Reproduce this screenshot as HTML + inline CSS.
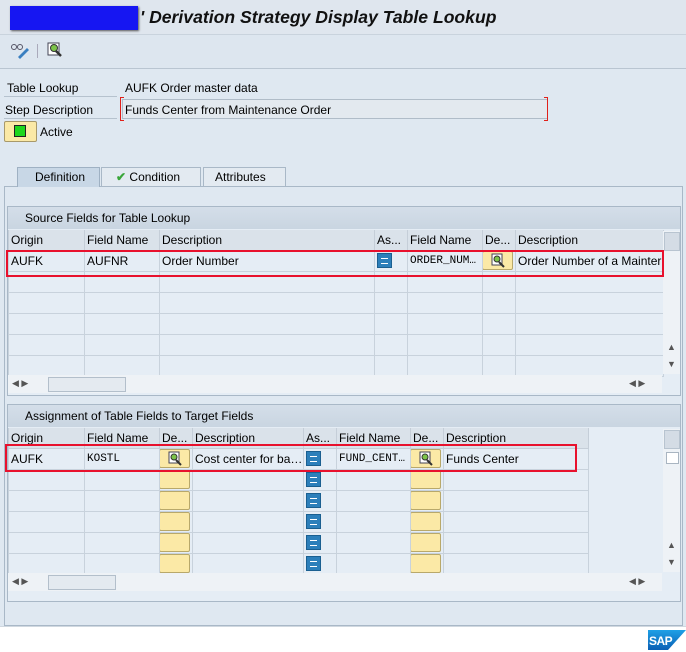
<!DOCTYPE html>
<html><head><meta charset="utf-8"><style>
*{margin:0;padding:0;box-sizing:border-box}
body{width:686px;height:652px;overflow:hidden;background:#dfe8f1;font-family:"Liberation Sans",sans-serif;font-size:12px;color:#000;position:relative}
.a{position:absolute}
.t{white-space:nowrap}
table{border-collapse:collapse;table-layout:fixed;position:absolute}
td{border:1px solid #c8d2dc;height:21px;padding:0 2px;white-space:nowrap;overflow:hidden;font-size:12px;background:#e5edf5}
tr.h td{background:#dae2ea;height:20px;border-color:#c5ced8;border-top:none}
.mono{font-family:"Liberation Mono",monospace;font-size:11px}
.yb{display:block;width:31px;height:19px;background:#fbe9a6;border:1px solid #b8a86a;border-radius:2px;margin-left:-1px;position:relative}
.bb{display:inline-block;width:15px;height:15px;background:#2c7fba;border:1px solid #1a5f90;position:relative;vertical-align:middle}
.bb:after{content:"";position:absolute;left:3px;top:4px;width:7px;height:4px;border-top:1.5px solid #fff;border-bottom:1.5px solid #fff}
.grp{position:absolute;border:1px solid #a9b8c7;background:#e5edf5}
.gh{position:absolute;left:0;right:0;top:0;height:22px;background:linear-gradient(#d4dee9,#c9d5e1);padding-left:17px;line-height:22px;font-size:12px}
.vs{position:absolute;background:#eef2f6}
.hs{position:absolute;background:#eef2f6}
.red{position:absolute;border:2px solid #e8112d}
</style></head><body>
<div class="a" style="left:0;top:0;width:686px;height:35px;background:#dfe6ee;border-bottom:1px solid #c9d3dd"></div>
<div class="a" style="left:10px;top:6px;width:128px;height:24px;background:#1616f2;box-shadow:1px 1px 2px #555"></div>
<div class="a t" style="left:140px;top:7px;font-size:17.6px;font-weight:bold;font-style:italic;color:#111">' Derivation Strategy Display Table Lookup</div>
<div class="a" style="left:0;top:35px;width:686px;height:34px;background:#dde6ef;border-bottom:1px solid #b9c5d1"></div>
<svg class="a" style="left:10px;top:42px" width="22" height="18"><circle cx="4" cy="5" r="2.5" fill="none" stroke="#556" /><circle cx="10" cy="5" r="2.5" fill="none" stroke="#556"/><path d="M8 15 L17 6 L19 8 L10 17 Z" fill="#3a7fc0"/></svg>
<div class="a" style="left:37px;top:44px;width:1px;height:14px;background:#aab"></div>
<svg class="a" style="left:46px;top:41px" width="18" height="18"><rect x="2" y="2" width="11" height="12" fill="#fff" stroke="#445"/><circle cx="8" cy="7" r="3.5" fill="#7cc44a" stroke="#333"/><path d="M10 10 L15 15" stroke="#333" stroke-width="2.5"/></svg>
<div class="a t" style="left:7px;top:81px">Table Lookup</div>
<div class="a t" style="left:125px;top:81px">AUFK Order master data</div>
<div class="a" style="left:4px;top:96px;width:113px;height:1px;background:#b6c2ce"></div>
<div class="a t" style="left:5px;top:103px">Step Description</div>
<div class="a" style="left:122px;top:99px;width:426px;height:20px;background:#e3e9ef;border:1px solid #b0bcc8"></div>
<div class="a t" style="left:125px;top:103px">Funds Center from Maintenance Order</div>
<div class="a" style="left:120px;top:97px;width:4px;height:24px;border:1.5px solid #e0201a;border-right:none"></div>
<div class="a" style="left:544px;top:97px;width:4px;height:24px;border:1.5px solid #e0201a;border-left:none"></div>
<div class="a" style="left:4px;top:118px;width:113px;height:1px;background:#b6c2ce"></div>
<div class="a" style="left:4px;top:121px;width:33px;height:21px;background:#fbe9a6;border:1px solid #a8996a;border-radius:2px"></div>
<div class="a" style="left:14px;top:125px;width:12px;height:12px;background:#1ed61e;border:1px solid #222"></div>
<div class="a t" style="left:40px;top:125px">Active</div>
<div class="a" style="left:4px;top:186px;width:679px;height:440px;background:#dfe8f1;border:1px solid #a9b8c7"></div>
<div class="a t" style="left:17px;top:167px;width:83px;height:20px;background:#c8d7e6;border:1px solid #9fb1c3;border-bottom:none;padding-left:17px;line-height:19px">Definition</div>
<div class="a t" style="left:101px;top:167px;width:100px;height:19px;background:#e3eaf1;border:1px solid #a9b8c7;border-bottom:none;padding-left:14px;line-height:19px"><span style="color:#3aa63a;font-weight:bold">✔</span> Condition</div>
<div class="a t" style="left:203px;top:167px;width:83px;height:19px;background:#e3eaf1;border:1px solid #a9b8c7;border-bottom:none;padding-left:11px;line-height:19px">Attributes</div>

<div class="grp" style="left:7px;top:206px;width:674px;height:190px">
<div class="gh">Source Fields for Table Lookup</div>
</div>
<table style="left:8px;top:230px;width:655px">
<colgroup><col style="width:76px"><col style="width:75px"><col style="width:215px"><col style="width:33px"><col style="width:75px"><col style="width:33px"><col style="width:148px"></colgroup>
<tr class="h"><td>Origin</td><td>Field Name</td><td>Description</td><td>As...</td><td>Field Name</td><td>De...</td><td>Description</td></tr>
<tr><td>AUFK</td><td>AUFNR</td><td>Order Number</td><td><span class="bb"></span></td><td class="mono">ORDER_NUM…</td><td style="padding:0"><span class="yb"><svg style="position:absolute;left:8px;top:1px" width="15" height="16"><rect x="1" y="1" width="10" height="11" fill="#fff" stroke="#445"/><circle cx="6" cy="6" r="3" fill="#7cc44a" stroke="#333"/><path d="M8 9 L13 14" stroke="#333" stroke-width="2"/></svg></span></td><td>Order Number of a Mainter</td></tr>
<tr><td></td><td></td><td></td><td></td><td></td><td></td><td></td></tr>
<tr><td></td><td></td><td></td><td></td><td></td><td></td><td></td></tr>
<tr><td></td><td></td><td></td><td></td><td></td><td></td><td></td></tr>
<tr><td></td><td></td><td></td><td></td><td></td><td></td><td></td></tr>
<tr><td style="height:16px"></td><td></td><td></td><td></td><td></td><td></td><td></td></tr>
</table>
<div class="vs" style="left:663px;top:231px;width:17px;height:143px"></div>
<div class="a" style="left:664px;top:232px;width:16px;height:19px;background:#d4dce5;border:1px solid #b8c4d0"></div>
<div class="a" style="left:667px;top:342px;font-size:9px;color:#555">▲</div>
<div class="a" style="left:667px;top:359px;font-size:9px;color:#555">▼</div>
<div class="hs" style="left:8px;top:375px;width:654px;height:18px"></div>
<div class="a" style="left:12px;top:378px;font-size:9px;color:#555">◀ ▶</div>
<div class="a" style="left:48px;top:377px;width:78px;height:15px;background:#e4eaf0;border:1px solid #b3bfcb"></div>
<div class="a" style="left:629px;top:378px;font-size:9px;color:#555">◀ ▶</div>
<div class="red" style="left:6px;top:250px;width:658px;height:27px"></div>

<div class="grp" style="left:7px;top:404px;width:674px;height:198px">
<div class="gh">Assignment of Table Fields to Target Fields</div>
</div>
<table style="left:8px;top:428px;width:580px">
<colgroup><col style="width:76px"><col style="width:75px"><col style="width:33px"><col style="width:111px"><col style="width:33px"><col style="width:74px"><col style="width:33px"><col style="width:145px"></colgroup>
<tr class="h"><td>Origin</td><td>Field Name</td><td>De...</td><td>Description</td><td>As...</td><td>Field Name</td><td>De...</td><td>Description</td></tr>
<tr><td>AUFK</td><td class="mono">KOSTL</td><td style="padding:0"><span class="yb"><svg style="position:absolute;left:8px;top:1px" width="15" height="16"><rect x="1" y="1" width="10" height="11" fill="#fff" stroke="#445"/><circle cx="6" cy="6" r="3" fill="#7cc44a" stroke="#333"/><path d="M8 9 L13 14" stroke="#333" stroke-width="2"/></svg></span></td><td>Cost center for ba…</td><td><span class="bb"></span></td><td class="mono">FUND_CENT…</td><td style="padding:0"><span class="yb"><svg style="position:absolute;left:8px;top:1px" width="15" height="16"><rect x="1" y="1" width="10" height="11" fill="#fff" stroke="#445"/><circle cx="6" cy="6" r="3" fill="#7cc44a" stroke="#333"/><path d="M8 9 L13 14" stroke="#333" stroke-width="2"/></svg></span></td><td>Funds Center</td></tr>
<tr><td></td><td></td><td style="padding:0"><span class="yb"></span></td><td></td><td><span class="bb"></span></td><td></td><td style="padding:0"><span class="yb"></span></td><td></td></tr>
<tr><td></td><td></td><td style="padding:0"><span class="yb"></span></td><td></td><td><span class="bb"></span></td><td></td><td style="padding:0"><span class="yb"></span></td><td></td></tr>
<tr><td></td><td></td><td style="padding:0"><span class="yb"></span></td><td></td><td><span class="bb"></span></td><td></td><td style="padding:0"><span class="yb"></span></td><td></td></tr>
<tr><td></td><td></td><td style="padding:0"><span class="yb"></span></td><td></td><td><span class="bb"></span></td><td></td><td style="padding:0"><span class="yb"></span></td><td></td></tr>
<tr><td></td><td></td><td style="padding:0"><span class="yb"></span></td><td></td><td><span class="bb"></span></td><td></td><td style="padding:0"><span class="yb"></span></td><td></td></tr>
</table>
<div class="vs" style="left:663px;top:429px;width:17px;height:143px"></div>
<div class="a" style="left:664px;top:430px;width:16px;height:19px;background:#d4dce5;border:1px solid #b8c4d0"></div>
<div class="a" style="left:666px;top:452px;width:13px;height:12px;background:#fff;border:1px solid #a9b5c1"></div>
<div class="a" style="left:667px;top:540px;font-size:9px;color:#555">▲</div>
<div class="a" style="left:667px;top:557px;font-size:9px;color:#555">▼</div>
<div class="hs" style="left:8px;top:573px;width:654px;height:18px"></div>
<div class="a" style="left:12px;top:576px;font-size:9px;color:#555">◀ ▶</div>
<div class="a" style="left:48px;top:575px;width:68px;height:15px;background:#e4eaf0;border:1px solid #b3bfcb"></div>
<div class="a" style="left:629px;top:576px;font-size:9px;color:#555">◀ ▶</div>
<div class="red" style="left:5px;top:444px;width:572px;height:28px"></div>

<div class="a" style="left:0;top:626px;width:686px;height:26px;background:#fff;border-top:1px solid #d0d8e0"></div>
<svg class="a" style="left:648px;top:630px" width="38" height="20"><defs><linearGradient id="g" x1="0" y1="0" x2="0" y2="1"><stop offset="0" stop-color="#1fa0e6"/><stop offset="1" stop-color="#0a5fb4"/></linearGradient></defs><path d="M0 0 H38 L20 20 H0 Z" fill="url(#g)"/><text x="1" y="15" font-family="Liberation Sans" font-weight="bold" font-size="12" letter-spacing="-0.5" fill="#fff">SAP</text></svg>
</body></html>
